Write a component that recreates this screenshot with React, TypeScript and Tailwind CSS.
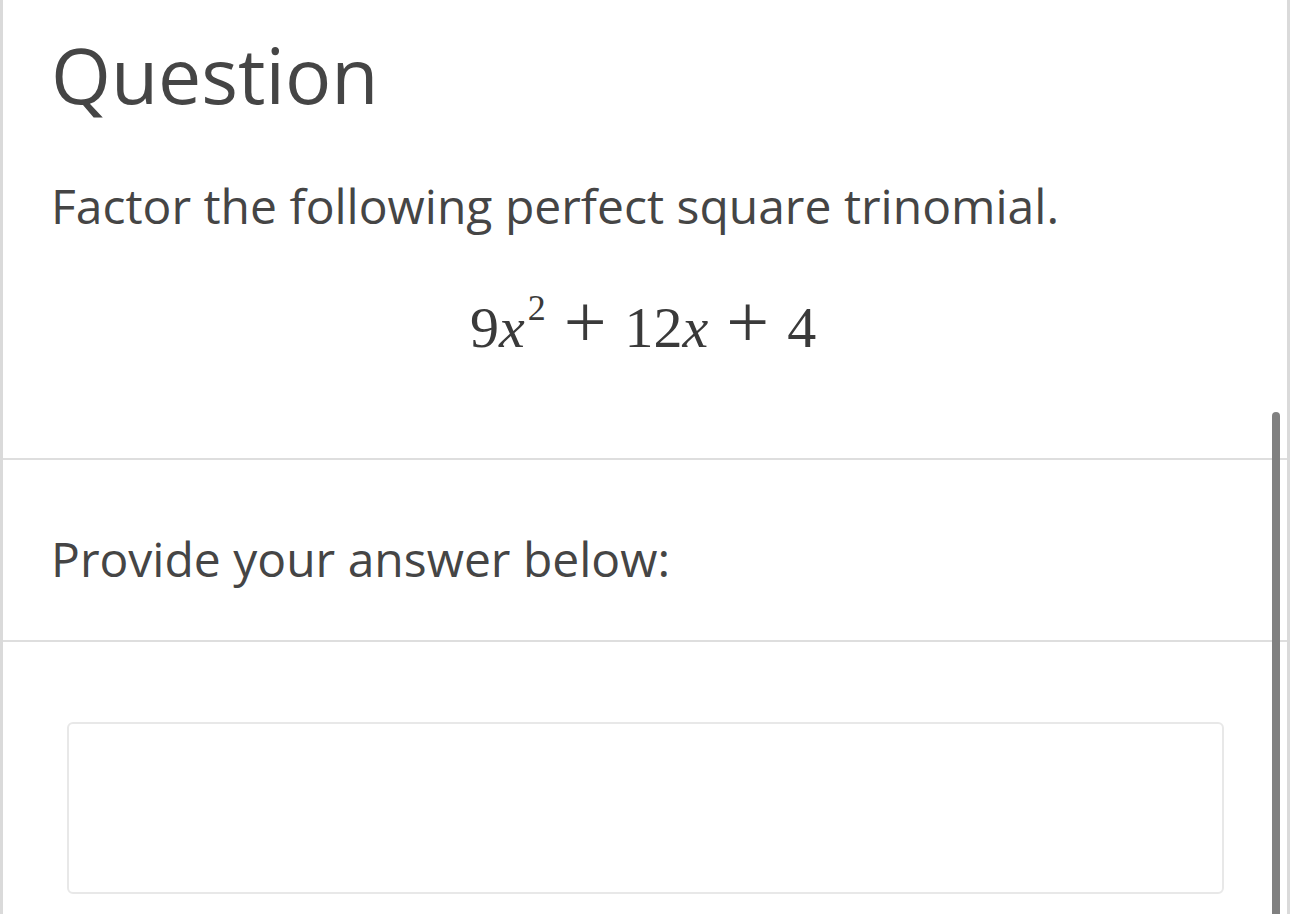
import React from "react";

const sans = { fontFamily: '"Open Sans", "Noto Sans", sans-serif' };
const serif = { fontFamily: '"Liberation Serif", "DejaVu Serif", serif' };

function Plus() {
  return <span className="mx-[18px] text-[76px] leading-[48px]">+</span>;
}

function MathLine() {
  return (
    <div
      className="flex items-baseline justify-center text-[58px] leading-[48px] text-[#3a3a3a]"
      style={serif}
    >
      <span>9</span>
      <span className="italic">x</span>
      <sup className="-top-[27px] ml-[3px] text-[36px] leading-[48px]">2</sup>
      <Plus />
      <span>12</span>
      <span className="italic">x</span>
      <Plus />
      <span>4</span>
    </div>
  );
}

export default function App() {
  return (
    <div
      className="relative h-[914px] w-[1290px] overflow-hidden border-x-[3px] border-[#dadada] bg-white text-[#454545]"
      style={sans}
    >
      <section className="h-[458px] pt-[31px]">
        <h1 className="pl-[48px] text-[77px] leading-[88px] font-normal">Question</h1>
        <p className="mt-[57px] pl-[48px] text-[48px] leading-[60px]">
          Factor the following perfect square trinomial.
        </p>
        <div className="mt-[61px] pr-[4px]">
          <MathLine />
        </div>
      </section>
      <div className="h-[2px] bg-[#dedede]" />
      <section className="h-[180px] pl-[48px] pt-[69px]">
        <p className="text-[48px] leading-[60px]">Provide your answer below:</p>
      </section>
      <div className="h-[2px] bg-[#dedede]" />
      <section className="pl-[64px] pr-[64px] pt-[80px]">
        <div className="h-[172px] w-[1157px] rounded-[6px] border-2 border-[#e8e8e8] bg-white" />
      </section>
      <div className="absolute right-[7px] top-[412px] h-[520px] w-[8px] rounded-t-full bg-[#808080]" />
    </div>
  );
}
